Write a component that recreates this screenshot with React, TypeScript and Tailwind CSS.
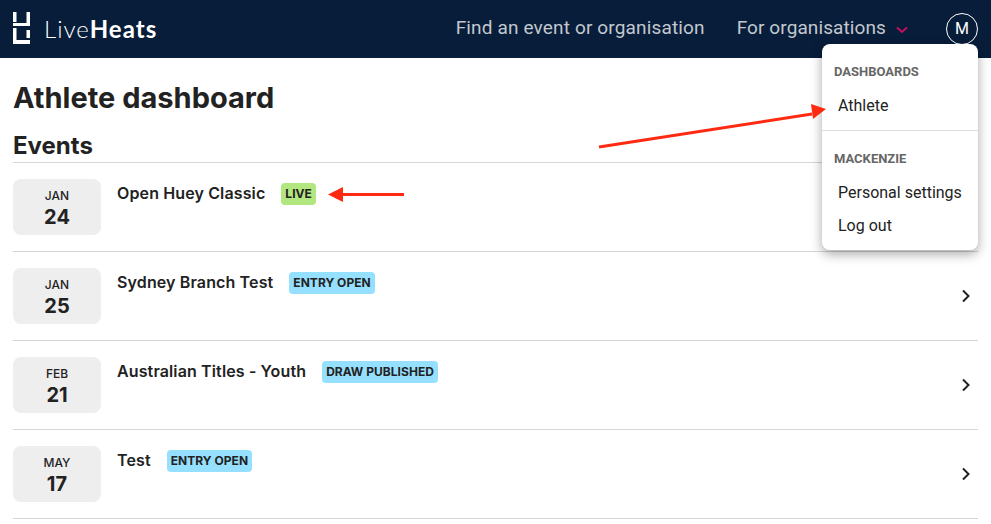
import React from "react";

const events = [
  { m: "JAN", d: "24", t: "Open Huey Classic", s: "LIVE", c: "bg-[#b2e67f]", chev: false },
  { m: "JAN", d: "25", t: "Sydney Branch Test", s: "ENTRY OPEN", c: "bg-[#96e0ff]", chev: true },
  { m: "FEB", d: "21", t: "Australian Titles - Youth", s: "DRAW PUBLISHED", c: "bg-[#96e0ff]", chev: true },
  { m: "MAY", d: "17", t: "Test", s: "ENTRY OPEN", c: "bg-[#96e0ff]", chev: true },
];

export default function App() {
  return (
    <div className="relative h-[524px] w-[991px] overflow-hidden bg-white font-['Inter',sans-serif] text-[#222]">
      <header className="flex h-[58px] items-center justify-between bg-[#071d3a] pl-[13px] pr-[13px]">
        <div className="flex items-center gap-[14px]">
          <svg width="17" height="32" viewBox="0 0 17 32" className="mt-[-2px] block">
            <g fill="#fff">
              <rect x="0" y="0" width="3.5" height="10" />
              <rect x="13.5" y="0" width="3.5" height="13" />
              <rect x="0" y="11" width="17" height="3" />
              <rect x="0" y="16" width="3.5" height="16" />
              <rect x="13.5" y="18" width="3.5" height="8" />
              <rect x="0" y="28" width="17" height="4" />
            </g>
          </svg>
          <div className="mt-[-1px] flex font-['Lato',sans-serif] text-[24px] leading-none tracking-[1px] text-white">
            <span className="font-light">Live</span>
            <span className="font-bold">Heats</span>
          </div>
        </div>
        <nav className="mt-[-1px] flex items-center font-['Roboto',sans-serif] text-[19px] text-[#c4c8cf]">
          <span className="tracking-[0.15px]">Find an event or organisation</span>
          <span className="ml-[32px] tracking-[0.1px]">For organisations</span>
          <svg width="12" height="8" viewBox="0 0 12 8" className="ml-[10px] mt-[2px]">
            <path d="M1 1.5 L6 6 L11 1.5" fill="none" stroke="#c4105f" strokeWidth="2" />
          </svg>
          <span className="ml-[38px] mt-[1px] flex h-8 w-8 items-center justify-center rounded-full border border-white text-[16px] text-white">M</span>
        </nav>
      </header>

      <main className="px-[13px]">
        <h1 className="mt-[23px] text-[29px] font-bold leading-[34px]">Athlete dashboard</h1>
        <h2 className="mt-[16px] border-b border-[#d6d6d6] pb-[2px] text-[24px] font-bold leading-[29px]">Events</h2>
        {events.map((e) => (
          <div key={e.t} className="flex h-[89px] items-start border-b border-[#d6d6d6] pt-4">
            <div className="flex h-14 w-[88px] flex-col items-center justify-center rounded-lg bg-[#eeeeee] pt-[2px]">
              <span className="text-[12px] font-medium leading-[16px]">{e.m}</span>
              <span className="mt-[1px] text-[20px] font-bold leading-[24px]">{e.d}</span>
            </div>
            <div className="ml-4 flex flex-1 items-center pt-[4px]">
              <span className="mb-[2px] text-[16px] font-semibold leading-[20px] tracking-[0.13px]">{e.t}</span>
              <span className={`ml-4 rounded-[4px] ${e.c} px-[4px] text-[12px] font-bold leading-[22px] tracking-[0.03px]`}>{e.s}</span>
            </div>
            {e.chev && (
              <svg width="10" height="14" viewBox="0 0 10 14" className="mr-[7px] mt-[21px]">
                <path d="M2 1.5 L7.5 7 L2 12.5" fill="none" stroke="#222" strokeWidth="2" />
              </svg>
            )}
          </div>
        ))}
      </main>

      <div className="absolute left-[822px] top-[44px] h-[206px] w-[156px] rounded-lg bg-white font-['Roboto',sans-serif] shadow-[0_4px_12px_rgba(0,0,0,0.35)]">
        <div className="px-3 pt-[20px] text-[13px] font-bold leading-[16px] text-[#666]">DASHBOARDS</div>
        <div className="px-4 pt-[16px] text-[16px] leading-[20px]">Athlete</div>
        <div className="mt-[14px] border-t border-[#dddddd]" />
        <div className="px-3 pt-[20px] text-[13px] font-bold leading-[16px] text-[#666]">MACKENZIE</div>
        <div className="px-4 pt-[16px] text-[16px] leading-[20px]">Personal settings</div>
        <div className="px-4 pt-[13px] text-[16px] leading-[20px]">Log out</div>
      </div>

      <svg className="absolute left-0 top-0" width="991" height="524" viewBox="0 0 991 524">
        <path d="M599 147 L812 114" stroke="#ff2a12" strokeWidth="3" fill="none" />
        <path d="M826 109 L811 104 L813 119 Z" fill="#ff2a12" />
        <path d="M404 194.5 L342 194.5" stroke="#ff2a12" strokeWidth="3" fill="none" />
        <path d="M328 194.5 L343 187 L343 202 Z" fill="#ff2a12" />
      </svg>
    </div>
  );
}
